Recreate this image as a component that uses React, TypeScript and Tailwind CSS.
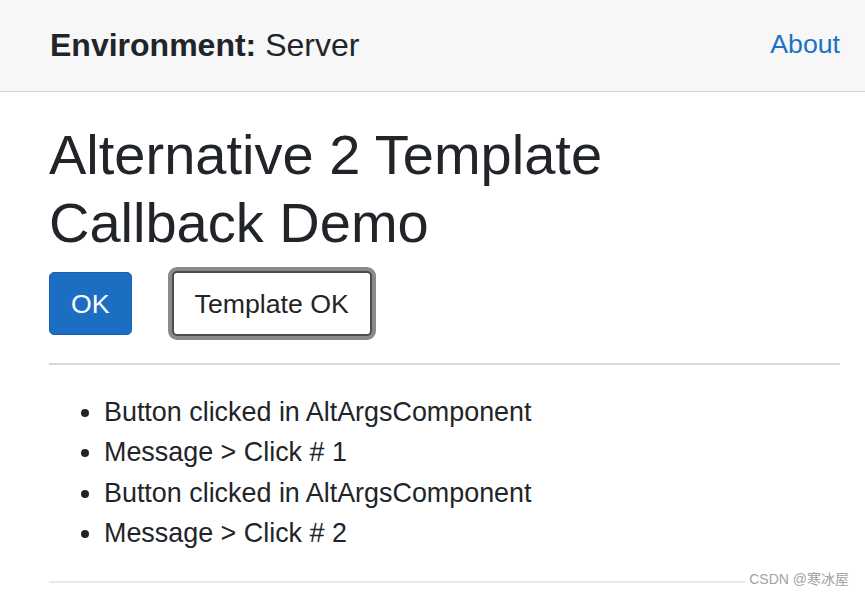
const MESSAGES = [
  "Button clicked in AltArgsComponent",
  "Message > Click # 1",
  "Button clicked in AltArgsComponent",
  "Message > Click # 2",
];

export default function App() {
  return (
    <div className="relative min-h-[597px] w-[865px] bg-white text-[#212529] font-['Liberation_Sans',Arial,sans-serif]">
      {/* Top row */}
      <header className="flex h-[92px] items-center justify-between border-b border-[#d6d5d5] bg-[#f7f7f7] pl-[50px] pr-[25px]">
        <div className="text-[32px] leading-[37px]">
          <span className="font-bold">Environment:</span> Server
        </div>
        <a href="#" className="mb-[3px] text-[26.7px] leading-[31px] text-[#1b72c6]">
          About
        </a>
      </header>

      {/* Page */}
      <main className="pl-[49px] pr-[25px] pt-[29px]">
        <h1 className="max-w-[640px] text-[56px] font-normal leading-[68px]">
          Alternative 2 Template Callback Demo
        </h1>

        <div className="mt-[14px] flex items-center gap-[40px]">
          <button className="h-[63px] rounded-[5px] border border-[#1861ac] bg-[#1b6ec2] px-[21px] text-[26.7px] leading-[40px] text-white">
            OK
          </button>
          <button className="h-[65px] rounded-[5px] border-2 border-[#4d4d4d] bg-white px-[21px] text-[26.7px] leading-[40px] text-[#212529] shadow-[0_0_0_4px_#8a8a8a]">
            Template OK
          </button>
        </div>

        <hr className="mt-[27px] border-t-2 border-[#d7d7d7]" />

        <ul className="mt-[27px] list-disc pl-[55px] text-[26.9px] leading-[40.3px]">
          {MESSAGES.map((m, i) => (
            <li key={i}>{m}</li>
          ))}
        </ul>

        <hr className="mt-[28px] border-t-2 border-[#e9e9e9]" />
      </main>

      {/* Watermark */}
      <div className="absolute right-[16px] top-[570px] bg-white pl-[4px] text-[14px] leading-[19px] text-[#a3a3a3] font-['Liberation_Sans','Noto_Sans_CJK_SC',sans-serif]">
        CSDN @寒冰屋
      </div>
    </div>
  );
}
